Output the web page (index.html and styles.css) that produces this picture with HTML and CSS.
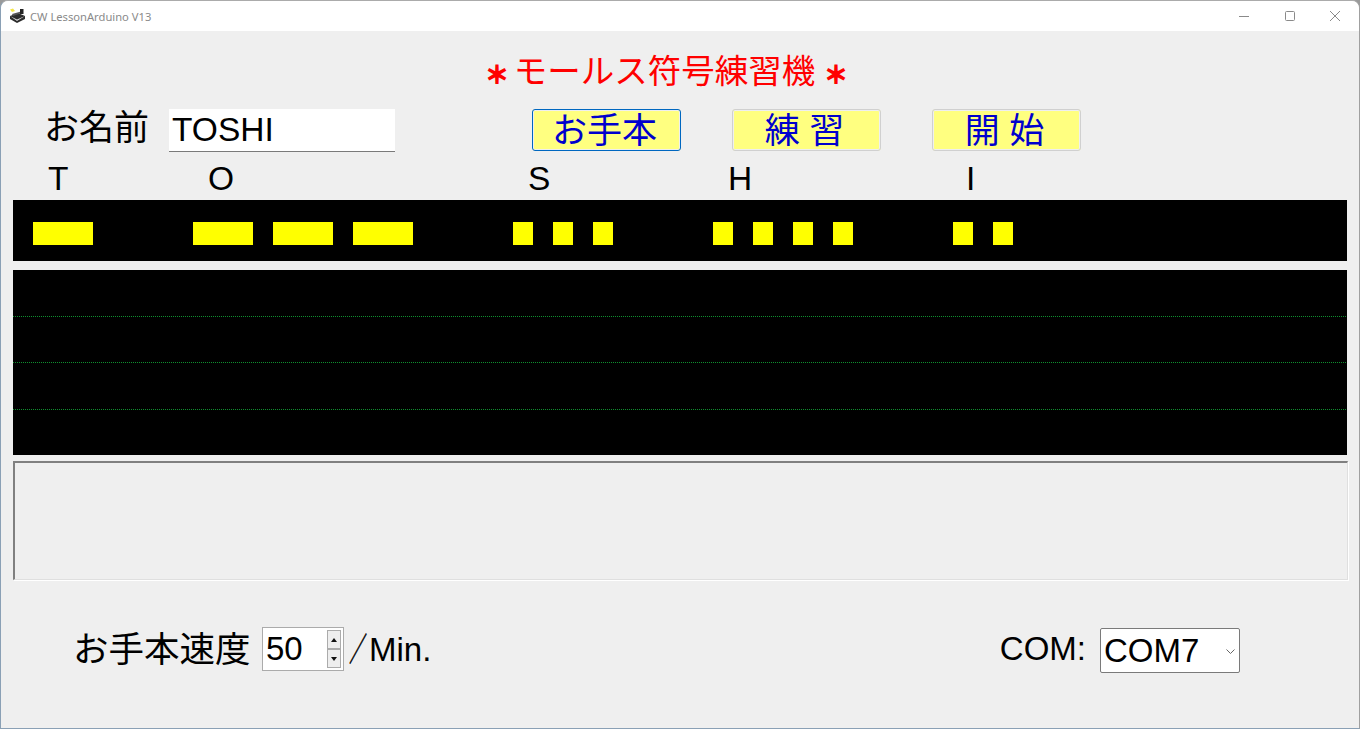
FILE: index.html
```html
<!DOCTYPE html>
<html lang="ja">
<head>
    <meta charset="UTF-8">
    <meta name="viewport" content="width=device-width, initial-scale=1.0">
    <title>CW LessonArduino V13</title>
    <link rel="stylesheet" href="styles.css">
</head>
<body>
    <div class="window">
        <div class="titlebar">
            <svg class="app-icon" width="17" height="16" viewBox="0 0 17 16">
                <path d="M1 1.5 L4 0.5 L6 3 L3 4 Z" fill="#f4e64a"/>
                <path d="M1 8 L9 5 L16 8 L16 11 L8 15 L1 11 Z" fill="#2b2b2b"/>
                <path d="M1 8 L8 11.5 L16 8 L8 13 Z" fill="#d8d8d8"/>
                <path d="M3 6 L12 3.5 L13 5 L4 8 Z" fill="#555555"/>
                <rect x="11" y="1" width="3.5" height="5" fill="#222222"/>
            </svg>
            <span class="app-title">CW LessonArduino V13</span>
            <div class="win-controls">
                <button class="win-btn"><svg width="10" height="10" viewBox="0 0 10 10"><path d="M0 5.5H10" stroke="#8a8a8a"/></svg></button>
                <button class="win-btn"><svg width="10" height="10" viewBox="0 0 10 10"><rect x="0.5" y="0.5" width="9" height="9" rx="1" fill="none" stroke="#8a8a8a"/></svg></button>
                <button class="win-btn"><svg width="10" height="10" viewBox="0 0 10 10"><path d="M0 0L10 10M10 0L0 10" stroke="#8a8a8a"/></svg></button>
            </div>
        </div>

        <div class="content">
            <h1 class="heading"><span class="star">＊</span>モールス符号練習機<span class="star star-right">＊</span></h1>

            <div class="form-row">
                <label class="name-label">お名前</label>
                <input class="name-input" type="text" value="TOSHI">
                <div class="actions">
                    <button class="action focused">お手本</button>
                    <button class="action">練 習</button>
                    <button class="action">開 始</button>
                </div>
            </div>

            <div class="letters">
                <span class="letter l-t">T</span>
                <span class="letter l-o">O</span>
                <span class="letter l-s">S</span>
                <span class="letter l-h">H</span>
                <span class="letter">I</span>
            </div>

            <div class="morse-panel">
                <div class="morse-char"><i class="dash"></i></div>
                <div class="morse-char"><i class="dash"></i><i class="dash"></i><i class="dash"></i></div>
                <div class="morse-char"><i class="dot"></i><i class="dot"></i><i class="dot"></i></div>
                <div class="morse-char"><i class="dot"></i><i class="dot"></i><i class="dot"></i><i class="dot"></i></div>
                <div class="morse-char"><i class="dot"></i><i class="dot"></i></div>
            </div>

            <div class="practice-panel">
                <div class="practice-row"></div>
                <div class="practice-row"></div>
                <div class="practice-row"></div>
                <div class="practice-row"></div>
            </div>

            <div class="group-box"></div>

            <div class="bottom-row">
                <span class="speed-label">お手本速度</span>
                <div class="spinner">
                    <span class="spinner-value">50</span>
                    <div class="spinner-buttons">
                        <div class="spin-btn"><svg width="6" height="4" viewBox="0 0 6 4"><path d="M3 0L6 4H0Z" fill="#111111"/></svg></div>
                        <div class="spin-btn"><svg width="6" height="4" viewBox="0 0 6 4"><path d="M0 0H6L3 4Z" fill="#111111"/></svg></div>
                    </div>
                </div>
                <span class="speed-unit"><span class="slash">／</span>Min.</span>
                <span class="com-label">COM:</span>
                <div class="com-select">
                    <span>COM7</span>
                    <svg width="9" height="5" viewBox="0 0 9 5"><path d="M0.5 0.5L4.5 4.5L8.5 0.5" fill="none" stroke="#666666"/></svg>
                </div>
            </div>
        </div>
    </div>
</body>
</html>
```

FILE: styles.css
```css
html, body {
    height: 100%;
}
body {
    margin: 0;
    background-color: #9a9a9a;
    overflow: hidden;
    font-family: "Liberation Sans", "Noto Sans CJK JP", sans-serif;
    color: #000000;
}
.window {
    box-sizing: border-box;
    width: 1360px;
    height: 729px;
    background-color: #EFEFEF;
    border: 1px solid #8AA0B5;
    border-top-color: #ABABAB;
    border-right-color: #A0A0A0;
    border-radius: 8px 8px 0 0;
    overflow: hidden;
}
.titlebar {
    display: flex;
    align-items: center;
    height: 30px;
    background-color: #FFFFFF;
    padding-left: 8px;
}
.app-icon {
    margin-right: 4px;
}
.app-title {
    font-family: "Noto Sans", sans-serif;
    font-size: 11.2px;
    color: #8A8A8A;
}
.win-controls {
    display: flex;
    margin-left: auto;
    margin-right: 1px;
}
.win-btn {
    display: flex;
    align-items: center;
    justify-content: center;
    width: 45.5px;
    height: 30px;
    padding: 0;
    border: none;
    background: transparent;
}
.content {
    padding: 0 12px;
}
.heading {
    box-sizing: border-box;
    height: 78px;
    margin: 0;
    padding-top: 2px;
    padding-right: 27px;
    line-height: 78px;
    font-size: 33.5px;
    font-weight: normal;
    text-align: center;
    color: #FF0000;
    white-space: nowrap;
}
.star {
    display: inline-block;
    width: 33.5px;
    font-size: 23px;
    text-align: center;
    -webkit-text-stroke: 2px #FF0000;
}
.star-right {
    margin-left: 4px;
}
.form-row {
    display: flex;
    align-items: flex-start;
    height: 43px;
    padding-left: 31px;
}
.name-label {
    width: 125px;
    margin-top: -3px;
    font-size: 35px;
    line-height: 44px;
}
.name-input {
    box-sizing: border-box;
    width: 226px;
    height: 43px;
    padding: 0 3px;
    border: none;
    border-bottom: 1px solid #7A7A7A;
    background-color: #FFFFFF;
    font-family: inherit;
    font-size: 33.5px;
    color: #000000;
}
.actions {
    display: flex;
    gap: 51px;
    margin-left: 137px;
}
.action {
    box-sizing: border-box;
    width: 149px;
    height: 42px;
    padding: 2px 4px 0 0;
    border: 1px solid #D0D0D0;
    border-radius: 3px;
    box-shadow: inset 0 0 0 1px #EFEFEF;
    background-color: #FFFF80;
    font-family: inherit;
    font-size: 35px;
    line-height: 36px;
    color: #0000CD;
}
.action.focused {
    border-color: #0067C0;
}
.letters {
    display: flex;
    box-sizing: border-box;
    height: 48px;
    padding-left: 35px;
    padding-top: 5px;
    font-size: 33.5px;
    line-height: 43px;
}
.l-t {
    width: 160px;
}
.l-o {
    width: 320px;
}
.l-s {
    width: 200px;
}
.l-h {
    width: 238px;
}
.morse-panel {
    display: flex;
    gap: 100px;
    box-sizing: border-box;
    height: 61px;
    padding: 22px 20px 0;
    background-color: #000000;
}
.morse-char {
    display: flex;
    gap: 20px;
}
.dash, .dot {
    display: block;
    height: 23px;
    background-color: #FFFF00;
}
.dash {
    width: 60px;
}
.dot {
    width: 20px;
}
.practice-panel {
    display: grid;
    grid-template-rows: 47px 46px 47px 45px;
    margin-top: 9px;
    background-color: #000000;
}
.practice-row {
    background-image: repeating-linear-gradient(90deg, #0F8F2F 0 1px, #000000 1px 2px);
    background-position: left bottom;
    background-size: 100% 1px;
    background-repeat: no-repeat;
}
.practice-row:last-child {
    background-image: none;
}
.group-box {
    box-sizing: border-box;
    height: 119px;
    margin: 6px -1px 0 0;
    border: 1px solid #DFDFDF;
    border-top: 2px solid #808080;
    border-left: 2px solid #808080;
    box-shadow: 1px 1px 0 #FFFFFF;
}
.bottom-row {
    display: flex;
    align-items: center;
    height: 44px;
    margin-top: 47px;
    padding-left: 60px;
}
.speed-label {
    width: 189px;
    margin-top: -6px;
    font-size: 35.5px;
}
.spinner {
    display: flex;
    box-sizing: border-box;
    width: 82px;
    height: 44px;
    padding: 1px 1px 1px 3px;
    border: 1px solid #ABABAB;
    background-color: #FFFFFF;
    align-items: center;
}
.spinner-value {
    flex: 1;
    font-size: 33px;
}
.spinner-buttons {
    display: flex;
    flex-direction: column;
    width: 14px;
    height: 38px;
    margin-right: 1px;
}
.spin-btn {
    display: flex;
    flex: 1;
    align-items: center;
    justify-content: center;
    border: 1px solid #ABABAB;
    background-color: #EEEEEE;
}
.speed-unit {
    margin-left: 5px;
    margin-top: -4px;
    font-size: 33px;
}
.slash {
    display: inline-block;
    width: 20px;
    transform: scaleX(0.55);
    transform-origin: left center;
    -webkit-text-stroke: 0.5px #000000;
}
.com-label {
    margin-left: auto;
    margin-right: 14px;
    font-size: 33px;
    margin-top: -1px;
}
.com-select {
    display: flex;
    align-items: center;
    justify-content: space-between;
    box-sizing: border-box;
    width: 140px;
    height: 45px;
    margin-top: 2px;
    margin-right: 107px;
    padding: 2px 4px 0 3px;
    border: 1px solid #7A7A7A;
    border-radius: 2px;
    background-color: #FFFFFF;
    font-size: 33px;
}
```
